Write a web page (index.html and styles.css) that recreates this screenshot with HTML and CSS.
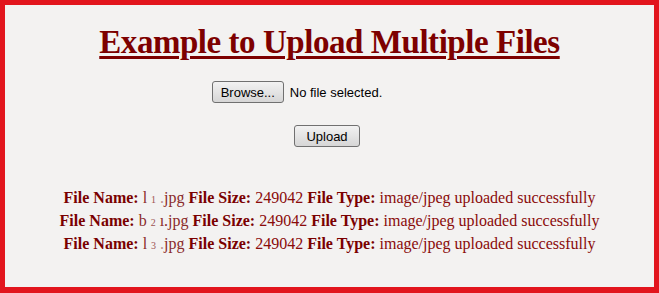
FILE: index.html
```html
<!DOCTYPE html>
<html>
<head>
<meta charset="utf-8">
<link rel="stylesheet" href="styles.css">
</head>
<body>
<div class="frame">
  <h1 class="title">Example to Upload Multiple Files</h1>
  <div class="picker">
    <span class="btn btn-browse">Browse...</span>
    <span class="nofile">No file selected.</span>
  </div>
  <div class="submit">
    <span class="btn btn-upload">Upload</span>
  </div>
  <div class="results">
    <p class="line"><b>File Name:</b> <span class="fn">l<span class="sm">1</span><span class="dim">.</span>jpg</span> <b>File Size:</b> 249042 <b>File Type:</b> image/jpeg uploaded successfully</p>
    <p class="line"><b>File Name:</b> <span class="fn">b<span class="sm">2</span>ı.jpg</span> <b>File Size:</b> 249042 <b>File Type:</b> image/jpeg uploaded successfully</p>
    <p class="line"><b>File Name:</b> <span class="fn">l<span class="sm">3</span><span class="dim">.</span>jpg</span> <b>File Size:</b> 249042 <b>File Type:</b> image/jpeg uploaded successfully</p>
  </div>
</div>
</body>
</html>
```
FILE: styles.css
```css
html, body {
  margin: 0;
  padding: 0;
}
body {
  width: 659px;
  height: 293px;
  overflow: hidden;
  background: #f2f2f2;
}
.frame {
  box-sizing: border-box;
  width: 659px;
  height: 293px;
  border: 5px solid #e2151d;
  border-bottom-width: 6px;
  background: #f3f2f1;
  display: flex;
  flex-direction: column;
  align-items: center;
  font-family: "Liberation Serif", "Times New Roman", serif;
}
.title {
  margin: 18px 0 0 0;
  font-size: 33px;
  line-height: 38px;
  font-weight: bold;
  color: #7d0000;
  text-decoration: underline;
  text-decoration-thickness: 3px;
  text-underline-offset: 3px;
  letter-spacing: -0.45px;
}
.picker {
  margin-top: 20px;
  display: flex;
  align-items: center;
  gap: 6px;
  padding-right: 65px;
  font-family: "Liberation Sans", Arial, sans-serif;
  font-size: 13px;
  color: #000;
}
.btn {
  box-sizing: border-box;
  display: inline-flex;
  align-items: center;
  justify-content: center;
  border: 1px solid #707070;
  border-radius: 3px;
  background: linear-gradient(#f2f2f2, #e4e4e4 50%, #d6d6d6);
  font-family: "Liberation Sans", Arial, sans-serif;
  font-size: 13px;
  color: #000;
}
.btn-browse {
  width: 72px;
  height: 22px;
}
.submit {
  margin-top: 22px;
  padding-right: 5px;
}
.btn-upload {
  width: 66px;
  height: 22px;
}
.results {
  margin-top: 40px;
  display: flex;
  flex-direction: column;
  align-items: center;
}
.line {
  margin: 0;
  font-size: 16px;
  line-height: 21px;
  color: #8a0a0a;
}
.line b {
  color: #7a0000;
}
.fn {
  color: #8a2a2a;
}
.sm {
  font-size: 10px;
  margin: 0 4px;
  opacity: 0.8;
}
.dim {
  opacity: 0.5;
}
```
